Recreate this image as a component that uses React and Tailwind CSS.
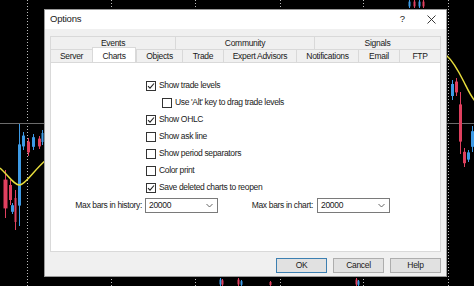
import React from 'react';

const font = { fontFamily: '"Liberation Sans", Arial, sans-serif' };

const RED = '#e0405f';
const BLUE = '#3d9be6';

// candles: [x, top, bottom, color, bodyWidth]
const candles = [
  [5, 170, 218, RED, 4],
  [10, 180, 205, RED, 3],
  [12, 203, 214, BLUE, 3],
  [15, 190, 230, RED, 2],
  [19, 124, 226, BLUE, 3],
  [23, 132, 150, BLUE, 3],
  [28, 138, 156, RED, 3],
  [33, 134, 150, BLUE, 3],
  [39, 136, 149, RED, 3],
  [42, 130, 145, BLUE, 2],
  [452, 80, 100, BLUE, 3],
  [456, 78, 96, RED, 3],
  [460, 92, 154, RED, 3],
  [464, 148, 167, RED, 3],
  [468, 150, 162, BLUE, 3],
  [472, 126, 152, BLUE, 3],
  [409, 0, 8, BLUE, 2],
  [414, 0, 8, RED, 2],
  [419, 0, 8, BLUE, 2],
  [423, 0, 8, RED, 2],
  [220, 278, 286, BLUE, 2],
  [222, 279, 286, RED, 2],
  [238, 278, 286, RED, 2],
  [241, 280, 286, BLUE, 2],
  [270, 281, 286, RED, 2],
  [356, 278, 286, RED, 2],
  [358, 280, 286, BLUE, 2],
];

function ChartBackdrop() {
  const grid = [27, 111, 195, 280, 363, 448];
  return (
    <svg className="absolute inset-0" width="474" height="286" viewBox="0 0 474 286">
      <rect width="474" height="286" fill="#000" />
      {grid.map(x => (
        <line key={x} x1={x + 0.5} y1="0" x2={x + 0.5} y2="286" stroke="#bdbdbd" strokeWidth="1" strokeDasharray="1 2" />
      ))}
      <line x1="0" y1="123.5" x2="474" y2="123.5" stroke="#6b6b6b" strokeWidth="1" />
      {candles.map(([x, t, b, c, w], i) => (
        <g key={i}>
          <line x1={x + 0.5} y1={t} x2={x + 0.5} y2={b} stroke={c} strokeWidth="1" />
          <rect x={x - w / 2 + 0.5} y={t + (b - t) * 0.2} width={w} height={(b - t) * 0.6} fill={c} />
        </g>
      ))}
      <path d="M0 168 C8 175 15 186 20 185 C26 184 34 170 46 160" fill="none" stroke="#e6dc3c" strokeWidth="1.5" />
      <path d="M446 55 C452 60 458 70 464 82 C468 90 471 97 476 102" fill="none" stroke="#e6dc3c" strokeWidth="1.5" />
    </svg>
  );
}

function CheckBox({ checked, label, indent }) {
  return (
    <div className={`flex items-center h-[17px] gap-[3px] ${indent ? 'pl-[16px]' : ''}`}>
      <div className="w-[10px] h-[10px] border border-[#333] bg-white flex items-center justify-center">
        {checked && (
          <svg width="8" height="8" viewBox="0 0 8 8">
            <path d="M1 4.2 L3 6.2 L7 1.5" fill="none" stroke="#222" strokeWidth="1.1" />
          </svg>
        )}
      </div>
      <span className="text-[8.5px] tracking-[-0.35px] text-[#1a1a1a]">{label}</span>
    </div>
  );
}

function Combo({ value }) {
  return (
    <div className="w-[73px] h-[15px] border border-[#7a7a7a] bg-white flex items-center justify-between pl-[3px] pr-[4px]">
      <span className="text-[8.5px] tracking-[-0.3px] text-[#1a1a1a]">{value}</span>
      <svg width="7" height="5" viewBox="0 0 7 5">
        <path d="M0.5 1 L3.5 4 L6.5 1" fill="none" stroke="#555" strokeWidth="0.9" />
      </svg>
    </div>
  );
}

const topTabs = [
  ['Events', 'w-[125px]'],
  ['Community', 'w-[139px]'],
  ['Signals', 'flex-1'],
];

const bottomTabs = [
  ['Server', 'w-[42px]'],
  ['Charts', 'w-[44px]'],
  ['Objects', 'w-[46px]'],
  ['Trade', 'w-[41px]'],
  ['Expert Advisors', 'w-[73px]'],
  ['Notifications', 'w-[62px]'],
  ['Email', 'w-[41px]'],
  ['FTP', 'flex-1'],
];

function Button({ children, primary }) {
  return (
    <div
      className={`w-[51px] h-[15px] flex items-center justify-center text-[8.5px] tracking-[-0.3px] text-[#1a1a1a] bg-[#e1e1e1] border ${
        primary ? 'border-[#3c7fb1]' : 'border-[#adadad]'
      }`}
    >
      {children}
    </div>
  );
}

export default function App() {
  return (
    <div className="relative w-[474px] h-[286px] overflow-hidden bg-black" style={font}>
      <ChartBackdrop />

      {/* Options window */}
      <div className="absolute left-[44px] top-[9px] w-[403px] h-[268px] bg-[#f0f0f0] border border-[#9a9a9a] flex flex-col">
        <div className="h-[19px] bg-white flex items-center pl-[5px] pr-[10px] shrink-0">
          <span className="text-[9.5px] tracking-[-0.2px] text-[#1a1a1a]">Options</span>
          <span className="ml-auto text-[9.5px] text-[#1a1a1a] mr-[22px]">?</span>
          <svg width="9" height="9" viewBox="0 0 9 9">
            <path d="M0.5 0.5 L8.5 8.5 M8.5 0.5 L0.5 8.5" stroke="#222" strokeWidth="0.9" />
          </svg>
        </div>

        <div className="flex-1 flex flex-col px-[5px] pt-[7px] pb-[4px]">
          <div className="flex h-[13px]">
            {topTabs.map(([t, w]) => (
              <div key={t} className={`${w} border border-b-0 border-r-0 last:border-r border-[#d9d9d9] bg-[#f0f0f0] flex items-center justify-center text-[8.5px] tracking-[-0.3px] text-[#1a1a1a]`}>
                {t}
              </div>
            ))}
          </div>
          <div className="flex h-[13px] items-end">
            {bottomTabs.map(([t, w]) => (
              t === 'Charts' ? (
                <div key={t} className={`${w} h-[15px] -mt-[2px] relative z-10 bg-white border border-b-0 border-[#d9d9d9] flex items-start pt-[2px] justify-center text-[8.5px] tracking-[-0.3px] text-[#1a1a1a]`}>
                  {t}
                </div>
              ) : (
                <div key={t} className={`${w} h-[13px] border border-b-0 border-r-0 last:border-r border-[#d9d9d9] bg-[#f0f0f0] flex items-center justify-center text-[8.5px] tracking-[-0.3px] text-[#1a1a1a]`}>
                  {t}
                </div>
              )
            ))}
          </div>

          <div className="h-[190px] bg-white border border-[#d9d9d9] pt-[14px] pl-[95px] flex flex-col">
            <CheckBox checked label="Show trade levels" />
            <CheckBox indent label="Use 'Alt' key to drag trade levels" />
            <CheckBox checked label="Show OHLC" />
            <CheckBox label="Show ask line" />
            <CheckBox label="Show period separators" />
            <CheckBox label="Color print" />
            <CheckBox checked label="Save deleted charts to reopen" />
            <div className="flex items-center mt-[2px] -ml-[95px]">
              <div className="w-[94px] text-right pr-[3px] text-[8.5px] tracking-[-0.35px] text-[#1a1a1a]">Max bars in history:</div>
              <Combo value="20000" />
              <div className="w-[99px] text-right pr-[4px] text-[8.5px] tracking-[-0.35px] text-[#1a1a1a]">Max bars in chart:</div>
              <Combo value="20000" />
            </div>
          </div>

          <div className="flex justify-end gap-[6px] mt-[6px]">
            <Button primary>OK</Button>
            <Button>Cancel</Button>
            <Button>Help</Button>
          </div>
        </div>
      </div>
    </div>
  );
}
